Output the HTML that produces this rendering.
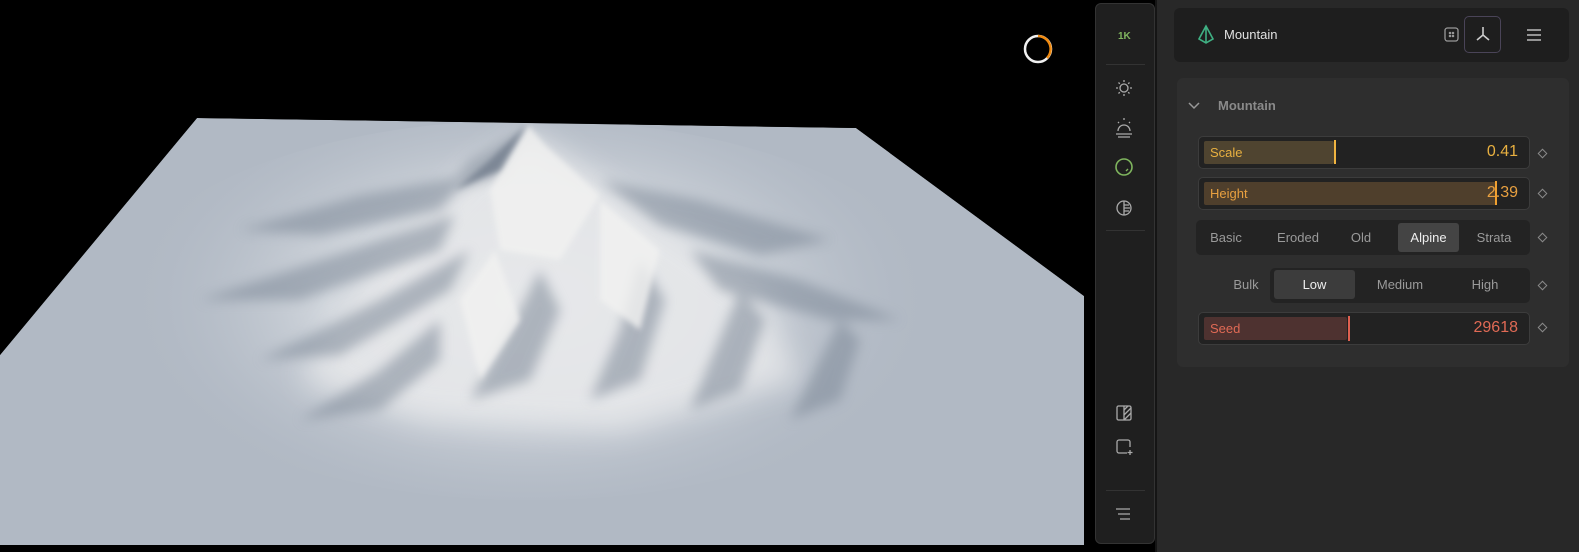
<!DOCTYPE html>
<html><head><meta charset="utf-8"><style>
*{margin:0;padding:0;box-sizing:border-box}
body{width:1579px;height:552px;background:#000;font-family:"Liberation Sans","DejaVu Sans",sans-serif;position:relative;overflow:hidden}
.abs{position:absolute}
.tb{left:1095px;top:3px;width:60px;height:541px;background:#1f1f1f;border:1px solid #333;border-radius:6px}
.gap{left:1155px;top:0;width:9px;height:552px;background:#151515}
.panel{left:1157px;top:0;width:422px;height:552px;background:#282828}
.card{background:#1e1e1e;border-radius:6px}
.sec{background:#2e2e2e;border-radius:6px}
.sl{border:1px solid #3c3c3c;background:#222;border-radius:5px;height:33px}
.dia{width:7px;height:7px;border:1.3px solid #8a8a8a;transform:rotate(45deg)}
.tab{color:#9a9a9a;font-size:13px;text-align:center;line-height:29px}
</style></head><body>
<svg class="abs" style="left:0;top:0" width="1090" height="552">
<defs>
<radialGradient id="m1" cx="530" cy="300" r="400" gradientUnits="userSpaceOnUse" gradientTransform="translate(530 300) scale(1 0.55) translate(-530 -300)">
<stop offset="0" stop-color="#e4e6e9"/><stop offset="0.5" stop-color="#d2d7dd"/><stop offset="1" stop-color="#b3bbc6" stop-opacity="0"/></radialGradient>
<filter id="b6"><feGaussianBlur stdDeviation="6"/></filter>
<filter id="b3"><feGaussianBlur stdDeviation="3"/></filter>
<filter id="b14"><feGaussianBlur stdDeviation="14"/></filter>
<clipPath id="cp"><polygon points="197,118 856,128 1084,296 1084,545 0,545 0,355"/></clipPath>
</defs>
<g clip-path="url(#cp)">
<polygon points="197,118 856,128 1084,296 1084,545 0,545 0,355" fill="#b1b9c4"/>
<ellipse cx="530" cy="310" rx="420" ry="190" fill="url(#m1)"/>
<g filter="url(#b14)" fill="#e8e9eb" opacity="0.8">
<polygon points="528,130 600,180 760,290 800,380 620,430 420,420 300,380 380,260 470,170"/>
</g>
<g filter="url(#b6)" fill="#7e8998" opacity="0.55">
<polygon points="525,128 470,160 440,195 500,175"/>
<polygon points="470,175 360,195 240,230 320,235 440,210"/>
<polygon points="455,215 350,250 200,300 300,300 440,250"/>
<polygon points="470,250 380,300 260,360 340,355 450,290"/>
<polygon points="440,320 380,370 300,420 380,410 440,360"/>
<polygon points="540,270 510,330 470,400 530,380 560,310"/>
<polygon points="640,260 620,330 590,400 640,380 665,300"/>
<polygon points="740,290 715,350 690,410 740,390 765,320"/>
<polygon points="840,320 810,380 790,420 840,400 860,340"/>
<polygon points="600,180 700,200 830,240 760,255 660,225"/>
<polygon points="690,250 800,280 900,320 830,320 720,290"/>
</g>
<g filter="url(#b3)" fill="#f2f2f1" opacity="0.8">
<polygon points="528,125 545,145 600,195 560,260 500,250 490,190"/>
<polygon points="600,200 660,250 640,330 600,300"/>
<polygon points="495,250 520,320 480,380 460,300"/>
</g>
<polygon points="528,123 490,160 455,190 500,170" fill="#6b7686" opacity="0.7" filter="url(#b3)"/>
</g>
</svg>
<svg class="abs" style="left:1021px;top:33px" width="34" height="34"><circle cx="17" cy="16" r="13" fill="none" stroke="#f0f0f0" stroke-width="2.5"/><path d="M17 3 A13 13 0 0 1 26 25" fill="none" stroke="#f08a10" stroke-width="2.5"/></svg>
<div class="abs gap"></div>
<div class="abs panel"></div>
<div class="abs tb">
<div class="abs" style="left:22px;top:27px;color:#7fb55e;font-size:10px;font-weight:bold">1K</div>
<div class="abs" style="left:10px;top:60px;width:39px;height:1px;background:#333"></div>
<svg class="abs" style="left:13px;top:70px" width="30" height="160" fill="none" stroke="#aaa" stroke-width="1.3">
<circle cx="15" cy="14" r="4"/><path d="M15 6v2M15 20v2M7 14h2M21 14h2M9.5 8.5l1.3 1.3M19.2 18.2l1.3 1.3M9.5 19.5l1.3-1.3M19.2 9.8l1.3-1.3"/>
<path d="M9 57a6 6 0 0 1 12 0M7 60h16M9 63h12M15 44v2M9 48l1 1M21 48l-1 1"/>
<circle cx="15" cy="93" r="8" stroke="#7fb55e" stroke-width="1.6"/><path d="M17 97l2-2" stroke="#7fb55e"/>
<circle cx="15" cy="134" r="7"/><path d="M15 127v14M15 131h5M15 134h6M15 137h5"/>
</svg>
<div class="abs" style="left:10px;top:226px;width:39px;height:1px;background:#333"></div>
<svg class="abs" style="left:13px;top:395px" width="30" height="70" fill="none" stroke="#aaa" stroke-width="1.3">
<rect x="8" y="7" width="14" height="14" rx="1.5"/><path d="M15 7v14M15 11l4-4M15 16l7-7M15 21l7-7"/>
<path d="M21 48v-5a2 2 0 0 0-2-2H10a2 2 0 0 0-2 2v9a2 2 0 0 0 2 2h8M21 51v5M18.5 53.5h5"/>
</svg>
<div class="abs" style="left:10px;top:486px;width:39px;height:1px;background:#333"></div>
<svg class="abs" style="left:13px;top:500px" width="30" height="25" fill="none" stroke="#aaa" stroke-width="1.3"><path d="M7 5h14M9 10h12M11 15h10"/></svg>
</div>
<div class="abs card" style="left:1174px;top:8px;width:395px;height:54px">
<svg class="abs" style="left:22px;top:16px" width="20" height="22" fill="none" stroke="#3fb083" stroke-width="1.6"><path d="M10 2L3 15l7 4 7-4z M10 2v17"/></svg>
<div class="abs" style="left:50px;top:19px;color:#e0e0e0;font-size:13px">Mountain</div>
<svg class="abs" style="left:268px;top:17px" width="20" height="20" fill="none" stroke="#999" stroke-width="1.3"><rect x="3" y="3" width="13" height="13" rx="2.5"/><circle cx="8" cy="8" r=".6"/><circle cx="11" cy="8" r=".6"/><circle cx="8" cy="11" r=".6"/><circle cx="11" cy="11" r=".6"/></svg>
<div class="abs" style="left:290px;top:8px;width:37px;height:37px;border:1.5px solid #4a4458;border-radius:5px"></div>
<svg class="abs" style="left:298px;top:15px" width="22" height="22" fill="none" stroke="#ccc" stroke-width="1.6"><path d="M11 4v8M11 12l-6 5M11 12l6 5"/></svg>
<svg class="abs" style="left:350px;top:17px" width="20" height="20" fill="none" stroke="#bbb" stroke-width="1.4"><path d="M3 5h14M3 10h14M3 15h14"/></svg>
</div>
<div class="abs sec" style="left:1177px;top:78px;width:392px;height:289px">
<svg class="abs" style="left:10px;top:22px" width="14" height="12" fill="none" stroke="#999" stroke-width="1.5"><path d="M2 3l5 5 5-5"/></svg>
<div class="abs" style="left:41px;top:20px;color:#8a8a8a;font-size:13px;font-weight:bold">Mountain</div>
</div>
<div class="abs sl" style="left:1198px;top:136px;width:332px">
<div class="abs" style="left:5px;top:4px;width:130px;height:23px;background:#4f4430;border-radius:2px"></div>
<div class="abs" style="left:135px;top:3px;width:2px;height:24px;background:#f0b440"></div>
<div class="abs" style="left:11px;top:8px;color:#e8b040;font-size:13px">Scale</div>
<div class="abs" style="right:11px;top:6px;color:#e8b040;font-size:16px">0.41</div>
</div>
<div class="abs sl" style="left:1198px;top:177px;width:332px">
<div class="abs" style="left:5px;top:4px;width:293px;height:23px;background:#4f3f2c;border-radius:2px"></div>
<div class="abs" style="left:296px;top:3px;width:2px;height:24px;background:#f0a030"></div>
<div class="abs" style="left:11px;top:8px;color:#e8a040;font-size:13px">Height</div>
<div class="abs" style="right:11px;top:6px;color:#e8a040;font-size:16px">2.39</div>
</div>
<div class="abs" style="left:1196px;top:220px;width:334px;height:35px;background:#232323;border-radius:5px">
<div class="abs tab" style="left:5px;top:3px;width:50px">Basic</div>
<div class="abs tab" style="left:70px;top:3px;width:64px">Eroded</div>
<div class="abs tab" style="left:140px;top:3px;width:50px">Old</div>
<div class="abs tab" style="left:202px;top:3px;width:61px;background:#444;border-radius:3px;color:#eee">Alpine</div>
<div class="abs tab" style="left:270px;top:3px;width:56px">Strata</div>
</div>
<div class="abs tab" style="left:1222px;top:270px;width:48px">Bulk</div>
<div class="abs" style="left:1270px;top:268px;width:260px;height:35px;background:#232323;border-radius:5px">
<div class="abs tab" style="left:4px;top:2px;width:81px;background:#3c3c3c;border-radius:3px;color:#eee">Low</div>
<div class="abs tab" style="left:90px;top:2px;width:80px">Medium</div>
<div class="abs tab" style="left:175px;top:2px;width:80px">High</div>
</div>
<div class="abs sl" style="left:1198px;top:312px;width:332px">
<div class="abs" style="left:5px;top:4px;width:143px;height:23px;background:#4e3230;border-radius:2px"></div>
<div class="abs" style="left:149px;top:3px;width:2px;height:25px;background:#e06050"></div>
<div class="abs" style="left:11px;top:8px;color:#e06a55;font-size:13px">Seed</div>
<div class="abs" style="right:11px;top:6px;color:#e06a55;font-size:16px">29618</div>
</div>
<div class="abs dia" style="left:1539px;top:150px"></div>
<div class="abs dia" style="left:1539px;top:190px"></div>
<div class="abs dia" style="left:1539px;top:234px"></div>
<div class="abs dia" style="left:1539px;top:282px"></div>
<div class="abs dia" style="left:1539px;top:324px"></div>
</body></html>
